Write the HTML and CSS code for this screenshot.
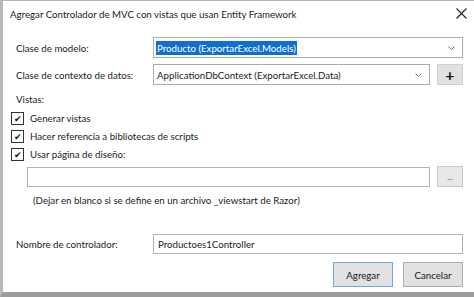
FILE: index.html
```html
<!DOCTYPE html>
<html lang="es">

<head>
    <meta charset="UTF-8">
    <title>Agregar Controlador</title>
    <link rel="stylesheet" href="styles.css">
</head>

<body>
    <div class="dialog">
        <div class="titlebar">
            <span class="title">Agregar Controlador de MVC con vistas que usan Entity Framework</span>
            <svg class="close" width="11" height="11" viewBox="0 0 11 11">
                <path d="M0.5 0.5 L10.5 10.5 M10.5 0.5 L0.5 10.5" stroke="#222" stroke-width="1.1" fill="none" />
            </svg>
        </div>

        <div class="content">
            <div class="row first">
                <span class="label">Clase de modelo:</span>
                <div class="combo">
                    <span class="selected">Producto (ExportarExcel.Models)</span>
                    <svg class="chev" width="7" height="4" viewBox="0 0 7 4"><path d="M0.5 0.5 L3.5 3.5 L6.5 0.5" stroke="#777" fill="none" /></svg>
                </div>
            </div>

            <div class="row">
                <span class="label">Clase de contexto de datos:</span>
                <div class="combo">
                    <span class="value">ApplicationDbContext (ExportarExcel.Data)</span>
                    <svg class="chev" width="7" height="4" viewBox="0 0 7 4"><path d="M0.5 0.5 L3.5 3.5 L6.5 0.5" stroke="#777" fill="none" /></svg>
                </div>
                <button class="btn small plus">+</button>
            </div>

            <div class="section">Vistas:</div>

            <div class="checks">
                <div class="check"><span class="box">✔</span>Generar vistas</div>
                <div class="check"><span class="box">✔</span>Hacer referencia a bibliotecas de scripts</div>
                <div class="check"><span class="box">✔</span>Usar página de diseño:</div>
            </div>

            <div class="row layout">
                <div class="input"></div>
                <button class="btn small dots">...</button>
            </div>
            <div class="hint">(Dejar en blanco si se define en un archivo _viewstart de Razor)</div>

            <div class="row name">
                <span class="label">Nombre de controlador:</span>
                <div class="input">Productoes1Controller</div>
            </div>

            <div class="actions">
                <button class="btn default">Agregar</button>
                <button class="btn">Cancelar</button>
            </div>
        </div>
    </div>
</body>

</html>
```

FILE: styles.css
```css
* {
    box-sizing: border-box;
}

body {
    margin: 0;
    background-color: #fff;
    font-family: Lato, "Open Sans", sans-serif;
    font-size: 9.7px;
    line-height: 14px;
    color: #1b1b1b;
}

.dialog {
    width: 474px;
    height: 297px;
    border-top: 1px solid #b5b5b5;
    border-left: 3px solid #b9b9b9;
    border-bottom: 5px solid #9c9c9c;
    background-color: #fff;
    overflow: hidden;
}

.titlebar {
    display: flex;
    align-items: center;
    justify-content: space-between;
    height: 25px;
    padding: 0 7px 0 7px;
}

.content {
    padding: 0 11px 0 13px;
}

.row {
    display: flex;
    align-items: center;
    gap: 7px;
    margin-top: 6px;
}

.row.first {
    margin-top: 11px;
}

.label {
    width: 130px;
    flex-shrink: 0;
    white-space: nowrap;
}

.combo {
    flex: 1;
    height: 21px;
    display: flex;
    align-items: center;
    justify-content: space-between;
    border: 1px solid #acacac;
    padding: 0 7px 0 2px;
    background-color: #fff;
}

.selected {
    background-color: #0f6fcf;
    color: #fff;
    padding: 0 1px;
    line-height: 14px;
}

.value {
    padding: 0 1px;
}

.btn {
    font-family: inherit;
    font-size: 9.7px;
    color: #1b1b1b;
    background-color: #e1e1e1;
    border: 1px solid #adadad;
    height: 25px;
    width: 60px;
    padding: 0;
}

.btn.small {
    width: 26px;
    height: 21px;
}

.plus {
    font-size: 16px;
    line-height: 16px;
    font-weight: 700;
    border-color: #d0d0d0;
}

.dots {
    font-size: 8px;
    line-height: 8px;
    color: #555;
    border-color: #c8c8c8;
    background-color: #e8e8e8;
}

.section {
    margin-top: 7px;
}

.checks {
    margin-top: 5px;
    margin-left: -5px;
    display: flex;
    flex-direction: column;
    gap: 4px;
}

.check {
    display: flex;
    align-items: center;
    gap: 6px;
    height: 14px;
}

.box {
    width: 13px;
    height: 13px;
    border: 1px solid #333;
    font-size: 9px;
    line-height: 11px;
    text-align: center;
    color: #111;
}

.layout {
    margin-top: 5px;
    margin-left: 11px;
}

.input {
    flex: 1;
    height: 20px;
    border: 1px solid #b3b3b3;
    padding: 0 4px;
    display: flex;
    align-items: center;
}

.hint {
    margin-top: 6px;
    margin-left: 17px;
}

.name {
    margin-top: 27px;
}

.actions {
    display: flex;
    justify-content: flex-end;
    gap: 10px;
    margin-top: 8px;
}

.btn.default {
    border-color: #6fa8dc;
}
```
